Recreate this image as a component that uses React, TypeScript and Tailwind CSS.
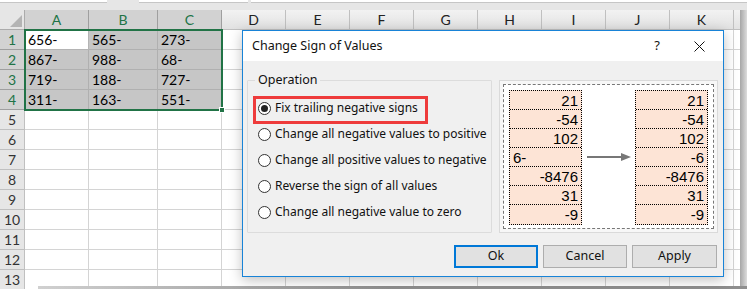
import React from "react";

const ui = { fontFamily: '"Noto Sans", "Liberation Sans", sans-serif' };
const cellFont = { fontFamily: 'Lato, "Liberation Sans", sans-serif' };
const arial = { fontFamily: '"Liberation Sans", Arial, sans-serif' };

const cols = [
  { l: "A", w: 64, sel: true },
  { l: "B", w: 69, sel: true },
  { l: "C", w: 64, sel: true },
  { l: "D", w: 64 },
  { l: "E", w: 64 },
  { l: "F", w: 64 },
  { l: "G", w: 64 },
  { l: "H", w: 64 },
  { l: "I", w: 64 },
  { l: "J", w: 64 },
  { l: "K", w: 64 },
  { l: "", w: 40 },
];

const data: string[][] = [
  ["656-", "565-", "273-"],
  ["867-", "988-", "68-"],
  ["719-", "188-", "727-"],
  ["311-", "163-", "551-"],
];

function Radio({ checked }: { checked?: boolean }) {
  return (
    <span className="w-[13px] h-[13px] rounded-full border border-[#333] bg-white flex items-center justify-center shrink-0">
      {checked && <span className="w-[7px] h-[7px] rounded-full bg-[#222]" />}
    </span>
  );
}

const left = ["21", "-54", "102", "6-", "-8476", "31", "-9"];
const right = ["21", "-54", "102", "-6", "-8476", "31", "-9"];

function PreviewCol({ vals }: { vals: string[] }) {
  return (
    <div className="w-[73px] shrink-0 border border-dotted border-black bg-[#fde4d6] flex flex-col" style={arial}>
      {vals.map((v, i) => (
        <div
          key={i}
          className={`h-[19px] flex items-center text-[15px] leading-none text-black ${v.endsWith("-") ? "justify-start pl-[3px]" : "justify-end pr-[3px]"} ${i < vals.length - 1 ? "border-b border-dotted border-black" : ""}`}
        >
          {v}
        </div>
      ))}
    </div>
  );
}

export default function App() {
  return (
    <div className="relative w-[747px] h-[289px] overflow-hidden bg-white">
      {/* top strip */}
      <div className="h-[10px] bg-[#e6e6e6] relative flex gap-0">
        <div className="h-[3px] w-[107px] bg-white border-b border-[#c6c6c6]" />
        <div className="h-[3px] w-[32px]" />
        <div className="h-[3px] w-[109px] bg-white border-b border-[#c6c6c6]" />
        <div className="h-[3px] w-[3px]" />
        <div className="h-[3px] flex-1 bg-white border-b border-[#c6c6c6]" />
      </div>
      {/* header row */}
      <div className="flex h-[20px]" style={cellFont}>
        <div className="w-[25px] shrink-0 bg-[#e6e6e6] border-r border-b border-[#ababab] relative">
          <svg className="absolute right-[2px] bottom-[2px]" width="12" height="12" viewBox="0 0 12 12">
            <polygon points="12,0 12,12 0,12" fill="#b4b4b4" />
          </svg>
        </div>
        {cols.map((c, i) => (
          <div
            key={i}
            className={`shrink-0 flex items-center justify-center text-[14px] border-r border-b ${c.sel ? "bg-[#d2d2d2] text-[#217346] border-[#9f9f9f]" : "bg-gradient-to-b from-[#f2f2f2] to-[#e2e2e2] text-[#222] border-[#c0c0c0]"}`}
            style={{ width: c.w }}
          >
            {c.l}
          </div>
        ))}
      </div>
      {/* rows */}
      {Array.from({ length: 13 }).map((_, r) => (
        <div key={r} className="flex h-[20px]" style={cellFont}>
          <div
            className={`w-[25px] shrink-0 flex items-center justify-center text-[14px] border-r border-b ${r < 4 ? "bg-[#d2d2d2] text-[#217346] border-[#9f9f9f]" : "bg-[#e6e6e6] text-[#333] border-[#c0c0c0]"}`}
          >
            {r + 1}
          </div>
          {cols.map((c, ci) => {
            const inSel = r < 4 && ci < 3;
            const active = r === 0 && ci === 0;
            return (
              <div
                key={ci}
                className={`shrink-0 flex items-center pl-[3px] text-[14px] text-black border-r border-b ${inSel ? (active ? "bg-white border-[#b4b4b4]" : "bg-[#c6c6c6] border-[#b0b0b0]") : "bg-white border-[#d4d4d4]"}`}
                style={{ width: c.w }}
              >
                {inSel ? data[r][ci] : ""}
              </div>
            );
          })}
        </div>
      ))}

      {/* selection border */}
      <div className="absolute left-[24px] top-[29px] w-[199px] h-[82px] border-2 border-[#217346] pointer-events-none" />
      <div className="absolute left-[219px] top-[107px] w-[6px] h-[6px] bg-[#217346] border border-white" />

      {/* screen shadows */}
      <div className="absolute right-0 top-[10px] w-[7px] h-[279px] bg-gradient-to-r from-[#a6a6a6] to-[#dcdcdc]" />
      <div className="absolute left-[38px] right-0 bottom-0 h-[3px] bg-gradient-to-r from-[#d0d0d0] via-[#8e8e8e] to-[#8e8e8e]" />

      {/* dialog */}
      <div
        className="absolute left-[242px] top-[30px] w-[482px] h-[247px] border border-[#1883d7] bg-[#f0f0f0] shadow-[0_3px_12px_rgba(0,0,0,0.25)] flex flex-col"
        style={ui}
      >
        <div className="h-[30px] bg-white flex items-center pl-[9px] pr-[18px] text-[12.5px] text-[#111]">
          <span>Change Sign of Values</span>
          <span className="ml-auto mr-[34px] text-[13px]">?</span>
          <svg width="11" height="11" viewBox="0 0 11 11">
            <path d="M0.5 0.5 L10.5 10.5 M10.5 0.5 L0.5 10.5" stroke="#111" strokeWidth="1" />
          </svg>
        </div>
        <div className="flex-1 flex flex-col px-[4px] pt-[11px]">
          <div className="flex gap-[7px] items-end">
            <fieldset className="relative w-[245px] min-w-0 shrink-0 h-[161px] border border-[#dcdcdc] rounded-[1px] pl-[10px] m-0">
              <legend className="px-[3px] ml-[-3px] text-[12.5px] text-[#111] leading-[16px]">Operation</legend>
              <div className="flex flex-col pt-[7px]">
                {[
                  "Fix trailing negative signs",
                  "Change all negative values to positive",
                  "Change all positive values to negative",
                  "Reverse the sign of all values",
                  "Change all negative value to zero",
                ].map((t, i) => (
                  <div key={i} className="h-[26px] flex items-center gap-[4px] text-[12px] text-[#111] whitespace-nowrap">
                    <Radio checked={i === 0} />
                    <span>{t}</span>
                  </div>
                ))}
              </div>
              <div className="absolute left-[5px] top-[8px] w-[175px] h-[28px] border-[3px] border-[#ee3b3b] pointer-events-none" />
            </fieldset>
            <div className="w-[219px] shrink-0 h-[153px] border border-[#dadada] bg-[#f7f7f7] p-[3px]">
              <div className="w-full h-full border border-dashed border-[#777] bg-white flex items-start pt-[5px] pl-[5px]">
                <PreviewCol vals={left} />
                <div className="w-[53px] shrink-0 h-[133px] flex items-center justify-center">
                  <svg width="44" height="10" viewBox="0 0 44 10">
                    <line x1="0" y1="5" x2="36" y2="5" stroke="#777" strokeWidth="2" />
                    <polygon points="34,1 44,5 34,9" fill="#777" />
                  </svg>
                </div>
                <PreviewCol vals={right} />
              </div>
            </div>
          </div>
          <div className="flex justify-end gap-[5px] mt-[12px] pr-[2px]">
            <button className="w-[84px] h-[23px] bg-[#e1e1e1] border-2 border-[#0078d7] text-[12.5px] text-[#111] flex items-center justify-center">Ok</button>
            <button className="w-[84px] h-[23px] bg-[#e1e1e1] border border-[#adadad] text-[12.5px] text-[#111] flex items-center justify-center">Cancel</button>
            <button className="w-[85px] h-[23px] bg-[#e1e1e1] border border-[#adadad] text-[12.5px] text-[#111] flex items-center justify-center">Apply</button>
          </div>
        </div>
      </div>
    </div>
  );
}
